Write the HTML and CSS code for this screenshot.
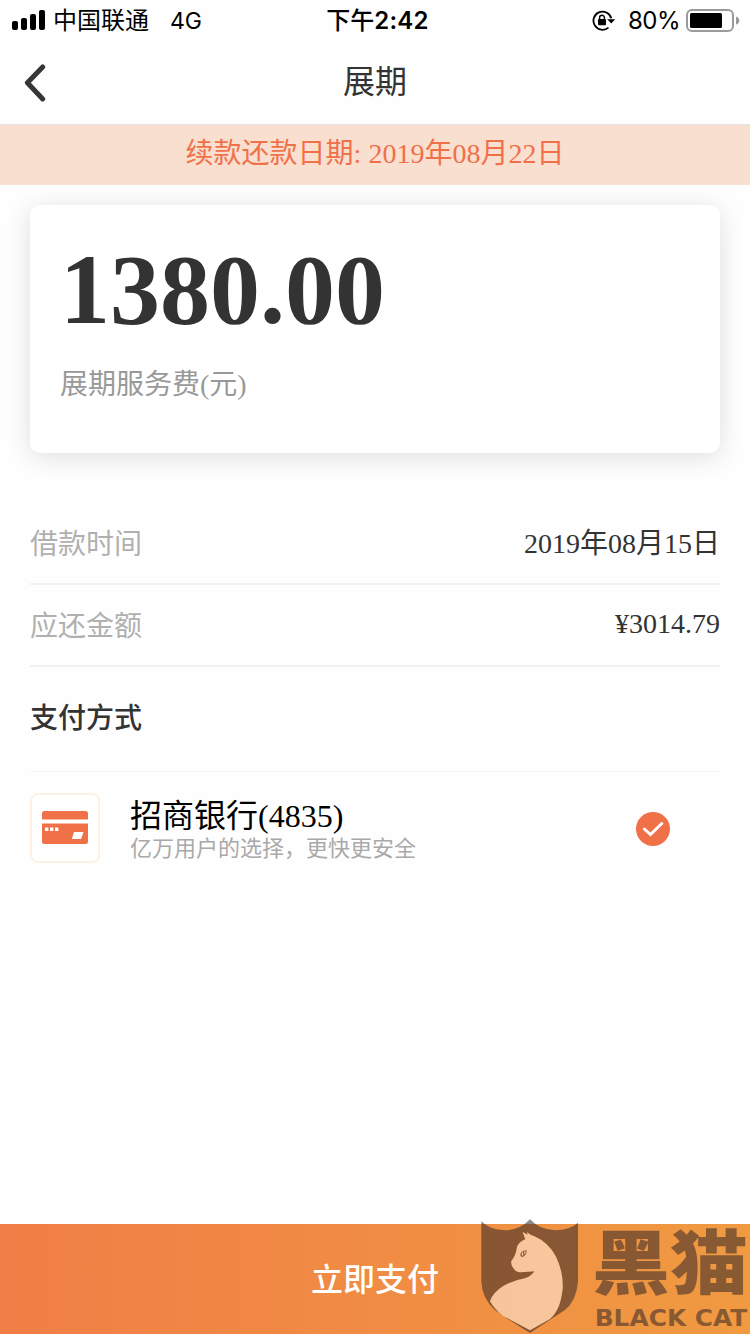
FILE: index.html
```html
<!DOCTYPE html>
<html lang="zh-CN">
<head>
<meta charset="utf-8">
<title>展期</title>
<link rel="stylesheet" href="styles.css">
</head>
<body>
<div class="page">
  <header class="status">
    <div class="status-left">
      <svg class="signal" width="34" height="20" viewBox="0 0 34 20"><rect x="0" y="11" width="6" height="9" rx="2"/><rect x="9" y="8" width="6" height="12" rx="2"/><rect x="18" y="4" width="6" height="16" rx="2"/><rect x="27" y="0" width="6" height="20" rx="2"/></svg>
      <span class="carrier">中国联通</span><span class="network">4G</span>
    </div>
    <div class="clock">下午<b class="clock-digits">2:42</b></div>
    <div class="status-right">
      <svg class="lock" width="24" height="22" viewBox="0 0 24 22"><path d="M19.3 8.2A9.1 9.1 0 1 0 16.5 17.6" fill="none" stroke="#000" stroke-width="1.8"/><path d="M15.2 9.3H23.2L19.2 13.6Z"/><rect x="6" y="9" width="8" height="6.2" rx="1"/><path d="M7.6 9.5V7.6a2.4 2.4 0 0 1 4.8 0V9.5" fill="none" stroke="#000" stroke-width="1.4"/></svg>
      <span class="percent">80%</span>
      <svg class="battery" width="54" height="24" viewBox="0 0 54 24"><rect x="1" y="1" width="46" height="21" rx="5" fill="none" stroke="#9a9a9a" stroke-width="2"/><rect x="4" y="4" width="32" height="15" rx="1.5"/><path d="M50 7.5q3.3 1 3.3 4t-3.3 4Z" fill="#9a9a9a"/></svg>
    </div>
  </header>
  <nav class="nav">
    <svg class="back" width="22" height="38" viewBox="0 0 22 38"><path d="M18.7 3L3.4 18.8L18.7 35" fill="none" stroke="#363636" stroke-width="5" stroke-linecap="round" stroke-linejoin="round"/></svg>
    <h1 class="title">展期</h1>
  </nav>
  <div class="banner">续款还款日期: 2019年08月22日</div>
  <main class="content">
    <section class="card">
      <div class="amount">1380.00</div>
      <div class="caption">展期服务费(元)</div>
    </section>
    <div class="row"><span class="label">借款时间</span><span class="value">2019年08月15日</span></div>
    <div class="row"><span class="label">应还金额</span><span class="value value-money">¥3014.79</span></div>
    <h2 class="heading">支付方式</h2>
    <div class="method">
      <div class="method-icon"><svg width="48" height="36" viewBox="0 0 48 36"><path fill="#f07048" d="M3.5 1H44.5Q47 1 47 3.5V9.5H1V3.5Q1 1 3.5 1ZM1 13.5H47V31.5Q47 34 44.5 34H3.5Q1 34 1 31.5Z"/><path fill="#fff" d="M4 17.5h3.4v3.5H4zM9 17.5h3.4v3.5H9zM14 17.5h3.4v3.5h-3.4zM33 22h9.5l-2.4 7H30.8z"/></svg></div>
      <div class="method-text">
        <div class="bank">招商银行(4835)</div>
        <div class="hint">亿万用户的选择，更快更安全</div>
      </div>
      <svg class="check" width="34" height="34" viewBox="0 0 34 34"><circle cx="17" cy="17" r="17" fill="#f07048"/><path d="M8.3 17L14.5 22.5L25.8 11.5" fill="none" stroke="#fff" stroke-width="3" stroke-linecap="round"/></svg>
    </div>
  </main>
  <footer class="pay">立即支付
    <svg class="watermark" width="280" height="124" viewBox="0 0 840 372">
      <g class="wm-dark" opacity=".5">
        <path fill-rule="evenodd" d="M34 34Q60 60 105 61Q150 60 180 28Q210 60 255 61Q300 60 324 38V215Q320 270 285 300Q245 326 180 369Q120 333 75 300Q36 265 34 215Z M158 66L166 88Q143 97 140 116Q138 135 124 153Q122 167 132 177Q140 188 152 187L193 184Q186 198 165 205Q130 211 100 228Q68 248 60 274Q75 300 100 318L180 361L240 327Q272 300 278 235Q280 185 258 140Q235 97 193 79L183 75L171 67L173 74Z"/>
        <text class="wm-cn" x="366" y="0" textLength="468" lengthAdjust="spacingAndGlyphs" transform="translate(0 238) scale(1 .92)">黑猫</text>
        <text class="wm-en" x="374" y="349" textLength="458" lengthAdjust="spacingAndGlyphs">BLACK CAT</text>
      </g>
      <path fill="#fff" fill-opacity=".48" d="M158 66L166 88Q143 97 140 116Q138 135 124 153Q122 167 132 177Q140 188 152 187L193 184Q186 198 165 205Q130 211 100 228Q68 248 60 274Q75 300 100 318L180 361L240 327Q272 300 278 235Q280 185 258 140Q235 97 193 79L183 75L171 67L173 74Z"/>
      <path fill="#895833" d="M151 136Q151 123 170 121Q170 136 157 141Q152 141 151 136Z"/>
      <path fill="#f8cba4" d="M155 129l4-3 1 10-4 2zM163 124l4-1-1 6-4 4z"/>
    </svg>
  </footer>
</div>
</body>
</html>
```
FILE: styles.css
```css
* { box-sizing: border-box; }
body { margin: 0; background: #fff; font-family: "Liberation Serif", "Noto Sans CJK SC", serif; }
.page { width: 750px; height: 1334px; display: flex; flex-direction: column; background: #fefefe; overflow: hidden; }

.status { height: 40px; padding: 0 12px; display: grid; grid-template-columns: 1fr auto 1fr; align-items: center; font: 24px/38px Inter, "Noto Sans CJK SC", sans-serif; color: #000; }
.status-left, .status-right { display: flex; align-items: center; }
.status span, .clock { padding-top: 2px; }
.carrier { margin-left: 7px; }
.network { margin-left: 21px; font-size: 23px; }
.clock { padding-left: 5px; font-weight: 500; white-space: nowrap; }
.clock-digits { font-weight: 600; letter-spacing: .2px; }
.status-right { justify-content: flex-end; }
.lock { margin-top: 1px; }
.percent { margin: 0 6px 0 12px; letter-spacing: -.5px; }
.battery { margin: 1px -2px 0 0; }

.nav { height: 85px; border-bottom: 1px solid #e3e3e5; display: grid; grid-template-columns: 100px 1fr 100px; align-items: center; }
.back { margin: 1px 0 0 24px; }
.title { margin: 0; padding-bottom: 1px; text-align: center; font-size: 32px; line-height: 40px; font-weight: 400; color: #333; }
.banner { height: 60px; background: #f9dfd0; color: #f07048; font-size: 28px; line-height: 58px; text-align: center; font-weight: 400; }

.content { flex: 1; padding: 20px 30px 0; }
.card { height: 248px; padding: 30px 30px 0; border-radius: 10px; background: #fff; box-shadow: 0 4px 26px rgba(0, 0, 0, .13); }
.amount { font-size: 100px; line-height: 110px; font-weight: 700; color: #333; }
.caption { margin-top: 20px; font-size: 28px; line-height: 40px; color: #999; }
.row { height: 82px; display: flex; justify-content: space-between; align-items: center; border-bottom: 2px solid #f2f2f2; font-size: 28px; line-height: 78px; }
.row span { padding-top: 2px; }
.card + .row { margin-top: 50px; }
.row .label { padding-top: 4px; line-height: 76px; color: #b0b0b0; }
.value { color: #333; }
.row .value-money { padding: 0 0 2px; line-height: 76px; }
.heading { margin: 0; height: 105px; border-bottom: 1px solid #f4f4f4; font-size: 28px; line-height: 104px; font-weight: 500; color: #333; }
.method { display: flex; align-items: center; height: 70px; margin-top: 21px; padding-right: 50px; }
.method-icon { width: 70px; height: 70px; display: grid; place-items: center; border: 2px solid #fdf1e4; border-radius: 8px; background: #fff; }
.method-text { flex: 1; margin-left: 30px; padding-top: 3px; }
.bank { font-size: 32px; line-height: 38px; color: #000; }
.hint { font-size: 22px; line-height: 28px; color: #a9a9a9; }
.check { flex: none; margin-top: 2px; }

.pay { position: relative; height: 110px; background: linear-gradient(90deg, #f07e46, #f09a41); color: #fff; text-align: center; font-size: 32px; line-height: 112px; font-weight: 500; }
.watermark { position: absolute; right: 0; bottom: 0; }
.wm-dark { fill: #221c25; }
.wm-cn { font: 900 230px "Noto Sans CJK SC", sans-serif; }
.wm-en { font: 700 68px "DejaVu Sans", sans-serif; }
```
